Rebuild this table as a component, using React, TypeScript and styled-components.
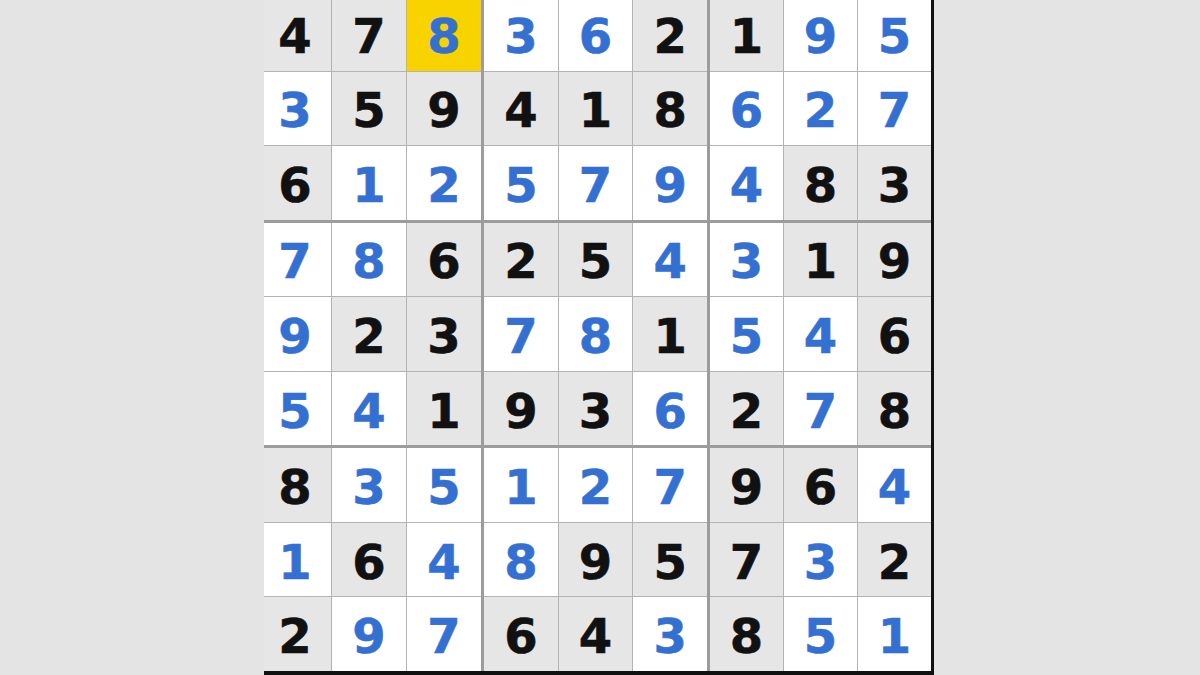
import React from "react";
import styled, { createGlobalStyle } from "styled-components";

const GlobalStyle = createGlobalStyle`
  html, body { margin: 0; padding: 0; background: #e4e4e4; overflow: hidden; }
  #root { width: 1200px; height: 675px; }
`;

const Page = styled.div`
  width: 1200px;
  height: 675px;
  background: #e4e4e4;
  display: flex;
  align-items: flex-start;
  padding-left: 264px;
  box-sizing: border-box;
  overflow: hidden;
`;

const Board = styled.div`
  margin-top: -3px;
  width: 670px;
  height: 678px;
  box-sizing: border-box;
  border-right: 3px solid #111;
  border-bottom: 4px solid #111;
  background: #9c9c9c;
  display: grid;
  grid-template-columns: 217px 223px 1fr;
  grid-template-rows: repeat(3, 1fr);
  gap: 3px;
`;

const Box = styled.div<{ $first: boolean }>`
  display: grid;
  grid-template-columns: ${(p) => (p.$first ? "67px 1fr 1fr" : "repeat(3, 1fr)")};
  grid-template-rows: repeat(3, 1fr);
  gap: 1px;
  background: #b3b3b3;
`;

const Cell = styled.div<{ $given: boolean; $selected: boolean; $edge: boolean }>`
  display: flex;
  align-items: center;
  justify-content: center;
  padding-right: ${(p) => (p.$edge ? "5px" : "0")};
  padding-top: 4px;
  box-sizing: border-box;
  background: ${(p) => (p.$selected ? "#f9d300" : p.$given ? "#e6e6e6" : "#ffffff")};
  color: ${(p) => (p.$given ? "#111111" : "#3470d2")};
  font-family: "DejaVu Sans", Verdana, sans-serif;
  font-weight: 700;
  font-size: 48px;
  line-height: 1;
  -webkit-text-stroke: 0.6px currentColor;
`;

// g = given (black), b = entered (blue)
const rows: string[] = [
  "4g 7g 8b 3b 6b 2g 1g 9b 5b",
  "3b 5g 9g 4g 1g 8g 6b 2b 7b",
  "6g 1b 2b 5b 7b 9b 4b 8g 3g",
  "7b 8b 6g 2g 5g 4b 3b 1g 9g",
  "9b 2g 3g 7b 8b 1g 5b 4b 6g",
  "5b 4b 1g 9g 3g 6b 2g 7b 8g",
  "8g 3b 5b 1b 2b 7b 9g 6g 4b",
  "1b 6g 4b 8b 9g 5g 7g 3b 2g",
  "2g 9b 7b 6g 4g 3b 8g 5b 1b",
];

const grid = rows.map((r) =>
  r.split(" ").map((t) => ({ value: t[0], given: t[1] === "g" }))
);

export default function App() {
  const boxes = [];
  for (let br = 0; br < 3; br++) {
    for (let bc = 0; bc < 3; bc++) {
      const cells = [];
      for (let r = 0; r < 3; r++) {
        for (let c = 0; c < 3; c++) {
          const row = br * 3 + r;
          const col = bc * 3 + c;
          const cell = grid[row][col];
          cells.push(
            <Cell
              key={`${row}-${col}`}
              $given={cell.given}
              $selected={row === 0 && col === 2}
              $edge={col === 0}
            >
              {cell.value}
            </Cell>
          );
        }
      }
      boxes.push(
        <Box key={`${br}-${bc}`} $first={bc === 0}>
          {cells}
        </Box>
      );
    }
  }
  return (
    <>
      <GlobalStyle />
      <Page>
        <Board>{boxes}</Board>
      </Page>
    </>
  );
}
